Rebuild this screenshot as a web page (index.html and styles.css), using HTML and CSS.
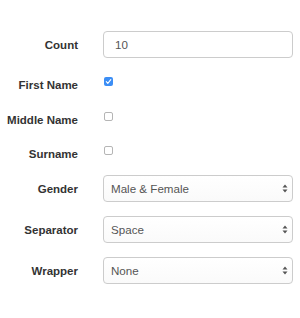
FILE: index.html
```html
<!DOCTYPE html>
<html>
<head>
<meta charset="utf-8">
<link rel="stylesheet" href="styles.css">
</head>
<body>
<form class="form">
  <div class="row row-field row-count">
    <label class="label">Count</label>
    <input class="control" type="text" value="10">
  </div>
  <div class="row row-check row-first">
    <label class="label">First Name</label>
    <div class="check-cell"><span class="checkbox checked"><svg width="9" height="9" viewBox="0 0 9 9"><path d="M2.3 4.7 L3.8 6.3 L6.8 2.6" fill="none" stroke="#fff" stroke-width="1.1" stroke-linecap="round" stroke-linejoin="round"/></svg></span></div>
  </div>
  <div class="row row-check row-middle">
    <label class="label">Middle Name</label>
    <div class="check-cell"><span class="checkbox"></span></div>
  </div>
  <div class="row row-check row-surname">
    <label class="label">Surname</label>
    <div class="check-cell"><span class="checkbox"></span></div>
  </div>
  <div class="row row-field row-gender">
    <label class="label">Gender</label>
    <div class="select-wrap">
      <select class="control select"><option>Male &amp; Female</option></select>
      <svg class="arrows" width="6" height="9" viewBox="0 0 6 9"><path d="M3 0.5 L5.5 3.5 L0.5 3.5 Z M3 8.5 L5.5 5.5 L0.5 5.5 Z" fill="#555"/></svg>
    </div>
  </div>
  <div class="row row-field row-sep">
    <label class="label">Separator</label>
    <div class="select-wrap">
      <select class="control select"><option>Space</option></select>
      <svg class="arrows" width="6" height="9" viewBox="0 0 6 9"><path d="M3 0.5 L5.5 3.5 L0.5 3.5 Z M3 8.5 L5.5 5.5 L0.5 5.5 Z" fill="#555"/></svg>
    </div>
  </div>
  <div class="row row-field row-sep">
    <label class="label">Wrapper</label>
    <div class="select-wrap">
      <select class="control select"><option>None</option></select>
      <svg class="arrows" width="6" height="9" viewBox="0 0 6 9"><path d="M3 0.5 L5.5 3.5 L0.5 3.5 Z M3 8.5 L5.5 5.5 L0.5 5.5 Z" fill="#555"/></svg>
    </div>
  </div>
</form>
</body>
</html>
```
FILE: styles.css
```css
html, body {
  margin: 0;
  padding: 0;
  background: #fff;
}
body {
  width: 300px;
  height: 318px;
  font-family: "Liberation Sans", Arial, Helvetica, sans-serif;
  font-size: 11.5px;
  color: #333;
}
.form {
  margin: 0;
  padding-top: 31px;
}
.row {
  display: grid;
  grid-template-columns: 78px 190px;
  column-gap: 25px;
}
.row-field {
  height: 27px;
  align-items: center;
}
.row-check {
  height: 22px;
  align-items: start;
}
.row-first { margin-top: 16px; }
.row-middle { margin-top: 13px; }
.row-surname { margin-top: 12px; }
.row-gender { margin-top: 10px; }
.row-sep { margin-top: 14px; }
.label {
  text-align: right;
  font-weight: bold;
  color: #333;
  white-space: nowrap;
}
.row-check .label {
  line-height: 22px;
}
.control {
  box-sizing: border-box;
  width: 190px;
  height: 27px;
  margin: 0;
  border: 1px solid #ccc;
  border-radius: 4px;
  background: #fff;
  font-family: "Liberation Sans", Arial, Helvetica, sans-serif;
  font-size: 11.6px;
  color: #555;
  padding: 0 11px;
  outline: none;
}
.select-wrap {
  position: relative;
  width: 190px;
  height: 27px;
}
.select {
  -webkit-appearance: none;
  appearance: none;
  padding: 0 7px;
  background: linear-gradient(#fff, #fafafa);
}
.arrows {
  position: absolute;
  right: 5px;
  top: 9px;
  pointer-events: none;
}
.check-cell {
  padding-top: 3px;
  padding-left: 1px;
}
.checkbox {
  box-sizing: border-box;
  display: block;
  width: 9px;
  height: 9px;
  border: 1px solid #b5b5b5;
  border-radius: 2px;
  background: #fff;
}
.checkbox.checked {
  border: none;
  background: #3c8ef5;
}
.checkbox svg {
  display: block;
}
```
